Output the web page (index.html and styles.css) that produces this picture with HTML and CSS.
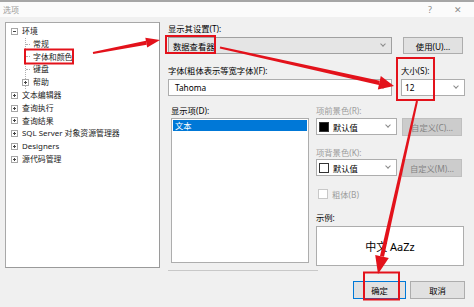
FILE: index.html
```html
<!DOCTYPE html>
<html lang="zh-CN">

<head>
    <meta charset="UTF-8">
    <title>选项</title>
    <link rel="stylesheet" href="styles.css">
</head>

<body>
    <div class="screen">
        <div class="window">
            <!-- Заголовок окна -->
            <div class="titlebar">
                <span class="title">选项</span>
                <span class="tb-btn help">?</span>
                <span class="tb-btn close">✕</span>
            </div>

            <div class="content">
                <!-- Дерево разделов -->
                <div class="tree">
                    <div class="node">
                        <svg class="exp" viewBox="0 0 7 7"><rect x=".5" y=".5" width="6" height="6" fill="#fff" stroke="#a6a6a6"/><path d="M2 3.5h3" stroke="#444"/></svg>
                        <span>环境</span>
                    </div>
                    <div class="children">
                        <div class="leaf">常规</div>
                        <div class="leaf">字体和颜色</div>
                        <div class="leaf">键盘</div>
                        <div class="node sub">
                            <svg class="exp" viewBox="0 0 7 7"><rect x=".5" y=".5" width="6" height="6" fill="#fff" stroke="#a6a6a6"/><path d="M2 3.5h3M3.5 2v3" stroke="#444"/></svg>
                            <span>帮助</span>
                        </div>
                    </div>
                    <div class="node">
                        <svg class="exp" viewBox="0 0 7 7"><rect x=".5" y=".5" width="6" height="6" fill="#fff" stroke="#a6a6a6"/><path d="M2 3.5h3M3.5 2v3" stroke="#444"/></svg>
                        <span>文本编辑器</span>
                    </div>
                    <div class="node">
                        <svg class="exp" viewBox="0 0 7 7"><rect x=".5" y=".5" width="6" height="6" fill="#fff" stroke="#a6a6a6"/><path d="M2 3.5h3M3.5 2v3" stroke="#444"/></svg>
                        <span>查询执行</span>
                    </div>
                    <div class="node">
                        <svg class="exp" viewBox="0 0 7 7"><rect x=".5" y=".5" width="6" height="6" fill="#fff" stroke="#a6a6a6"/><path d="M2 3.5h3M3.5 2v3" stroke="#444"/></svg>
                        <span>查询结果</span>
                    </div>
                    <div class="node">
                        <svg class="exp" viewBox="0 0 7 7"><rect x=".5" y=".5" width="6" height="6" fill="#fff" stroke="#a6a6a6"/><path d="M2 3.5h3M3.5 2v3" stroke="#444"/></svg>
                        <span>SQL Server 对象资源管理器</span>
                    </div>
                    <div class="node">
                        <svg class="exp" viewBox="0 0 7 7"><rect x=".5" y=".5" width="6" height="6" fill="#fff" stroke="#a6a6a6"/><path d="M2 3.5h3M3.5 2v3" stroke="#444"/></svg>
                        <span>Designers</span>
                    </div>
                    <div class="node">
                        <svg class="exp" viewBox="0 0 7 7"><rect x=".5" y=".5" width="6" height="6" fill="#fff" stroke="#a6a6a6"/><path d="M2 3.5h3M3.5 2v3" stroke="#444"/></svg>
                        <span>源代码管理</span>
                    </div>
                </div>

                <!-- Настройки шрифта -->
                <div class="main">
                    <div class="label">显示其设置(T):</div>
                    <div class="row r1">
                        <div class="combo show"><span class="combo-text">数据查看器</span><i class="arrow"></i></div>
                        <button class="btn use">使用(U)...</button>
                    </div>

                    <div class="row r2">
                        <div class="font-field">
                            <div class="label">字体(粗体表示等宽字体)(F):</div>
                            <div class="combo font"><span class="combo-text">Tahoma</span><i class="arrow"></i></div>
                        </div>
                        <div class="size-field">
                            <div class="label">大小(S):</div>
                            <div class="combo size"><span class="combo-text">12</span><i class="arrow"></i></div>
                        </div>
                    </div>

                    <div class="row r3">
                        <div class="items">
                            <div class="label">显示项(D):</div>
                            <div class="list">
                                <div class="list-item selected">文本</div>
                            </div>
                        </div>
                        <div class="props">
                            <div class="label disabled">项前景色(R):</div>
                            <div class="prop-row first">
                                <div class="combo color"><span class="swatch black"></span><span class="combo-text">默认值</span><i class="arrow"></i></div>
                                <button class="btn custom" disabled>自定义(C)...</button>
                            </div>
                            <div class="label disabled second">项背景色(K):</div>
                            <div class="prop-row">
                                <div class="combo color"><span class="swatch white"></span><span class="combo-text">默认值</span><i class="arrow"></i></div>
                                <button class="btn custom" disabled>自定义(M)...</button>
                            </div>
                            <div class="check"><span class="box"></span>粗体(B)</div>
                            <div class="label sample-label">示例:</div>
                            <div class="sample">中文 AaZz</div>
                        </div>
                    </div>

                    <div class="sep"></div>

                    <div class="footer">
                        <button class="btn ok">确定</button>
                        <button class="btn cancel">取消</button>
                    </div>
                </div>
            </div>
        </div>

        <!-- Красные пометки поверх окна -->
        <svg class="marks" width="474" height="307" viewBox="0 0 474 307">
            <g fill="none" stroke="#e3121b" stroke-width="2">
                <rect x="25" y="49.5" width="48" height="14"/>
                <rect x="166" y="36" width="49" height="17"/>
                <rect x="397" y="58" width="37" height="42"/>
                <rect x="364" y="272.5" width="35" height="27"/>
            </g>
            <g fill="#e3121b">
                <polygon points="92.8,52 145.9,40.7 146.7,44.7 93.2,54"/>
                <polygon points="160,40 147.2,47.6 145.3,37.8"/>
                <polygon points="220.2,46.5 379.8,80.7 378.8,84.9 219.8,48.5"/>
                <polygon points="394,86 377.8,89.6 380.8,76"/>
                <polygon points="416,100.8 418,101.2 384,256.8 380,256"/>
                <polygon points="378,274 388.8,257.9 375.2,254.9"/>
            </g>
        </svg>
    </div>
</body>

</html>
```

FILE: styles.css
```css
* {
    box-sizing: border-box;
}

html,
body {
    height: 100%;
    margin: 0;
}

body {
    background: #f0f0f0;
    font-family: "Noto Sans", "Noto Sans CJK SC", sans-serif;
    font-size: 8.3px;
    color: #000;
}

.screen {
    position: relative;
    width: 474px;
    height: 307px;
    overflow: hidden;
}

.window {
    width: 474px;
    height: 307px;
    display: flex;
    flex-direction: column;
}

.titlebar {
    height: 17px;
    border-top: 2px solid #a6a6a6;
    background: #fbfbfb;
    display: flex;
    align-items: center;
    padding-left: 3px;
    color: #9a9a9a;
    font-size: 8px;
}

.title {
    flex: 1;
}

.tb-btn {
    text-align: center;
    color: #8a8a8a;
    font-size: 9px;
}

.help {
    width: 32px;
}

.close {
    width: 24px;
    margin-right: 4px;
}

.content {
    flex: 1;
    display: flex;
    gap: 8px;
    padding: 5px 0 0 5px;
}

/* Дерево */
.tree {
    width: 155px;
    height: 246px;
    background: #fff;
    border: 1px solid #a8a8a8;
    border-right-color: #9a9a9a;
    border-bottom-color: #9a9a9a;
    padding-top: 2px;
    line-height: 12.8px;
    white-space: nowrap;
    color: #1a1a1a;
    font-size: 7.9px;
}

.node {
    display: flex;
    align-items: center;
    height: 12.8px;
    padding-left: 5px;
}

.exp {
    width: 7px;
    height: 7px;
    flex: none;
    margin-right: 4px;
}

.children {
    margin-left: 19px;
    border-left: 1px dotted #b0b0b0;
}

.leaf {
    display: flex;
    align-items: center;
    height: 12.8px;
}

.leaf::before {
    content: "";
    width: 4px;
    border-top: 1px dotted #b0b0b0;
    margin-right: 3px;
}

.node.sub {
    padding-left: 0;
    margin-left: -4px;
}

/* Правая часть */
.main {
    width: 297px;
    display: flex;
    flex-direction: column;
}

.label {
    height: 13px;
    line-height: 13px;
    white-space: nowrap;
}

.label.disabled {
    color: #9c9c9c;
}

.row {
    display: flex;
}

.r1 {
    margin-top: 2px;
    gap: 11px;
}

.r2 {
    margin-top: 10px;
    gap: 9px;
}

.r3 {
    margin-top: 8px;
    gap: 7px;
}

.combo {
    height: 17px;
    border: 1px solid #adadad;
    background: #fff;
    display: flex;
    align-items: center;
    padding-left: 4px;
    white-space: nowrap;
}

.combo-text {
    flex: 1;
}

.arrow {
    width: 4px;
    height: 4px;
    border-right: 1px solid #8a8a8a;
    border-bottom: 1px solid #8a8a8a;
    transform: rotate(45deg);
    margin: -3px 6px 0 0;
}

.combo.show {
    width: 224px;
    background: #e5e5e5;
    border-color: #a0a0a0;
}

.font-field {
    width: 224px;
}

.size-field {
    width: 64px;
}

.combo.font {
    margin-top: 2px;
    padding-left: 6px;
}

.combo.size {
    margin-top: 2px;
    padding-left: 3px;
}

.btn {
    height: 17px;
    border: 1px solid #adadad;
    background: #e1e1e1;
    font: inherit;
    color: #000;
    padding: 0;
}

.use {
    width: 60px;
}

/* Список элементов */
.items {
    margin-left: 3px;
    width: 138px;
}

.list {
    margin-top: 1px;
    height: 145px;
    border: 1px solid #adadad;
    background: #fff;
    padding: 1px;
}

.list-item {
    height: 11px;
    line-height: 11px;
    padding-left: 2px;
}

.list-item.selected {
    background: #0078d7;
    color: #fff;
}

.props {
    width: 149px;
}

.prop-row {
    display: flex;
    gap: 5px;
}

.prop-row.first {
    margin-top: 1px;
}

.label.second {
    margin-top: 10px;
}

.combo.color {
    width: 81px;
    padding-left: 2px;
}

.swatch {
    width: 10px;
    height: 10px;
    border: 1px solid #333;
    margin-right: 4px;
}

.swatch.black {
    background: #000;
}

.swatch.white {
    background: #fff;
}

.btn.custom {
    width: 60px;
    height: 18px;
    background: #cccccc;
    border-color: #bfbfbf;
    color: #838383;
}

.check {
    margin-top: 11px;
    height: 12px;
    display: flex;
    align-items: center;
    color: #9c9c9c;
}

.box {
    width: 10px;
    height: 10px;
    border: 1px solid #c8c8c8;
    background: #fff;
    margin: 0 4px 0 2px;
}

.sample-label {
    margin-top: 11px;
}

.sample {
    margin-top: 2px;
    width: 148px;
    height: 40px;
    border: 1px solid #adadad;
    background: #fff;
    display: flex;
    align-items: center;
    justify-content: center;
    font-size: 11px;
}

.sep {
    margin-top: 4px;
    width: 150px;
    height: 1px;
    background: #c8c8c8;
}

.footer {
    margin-top: 10px;
    display: flex;
    justify-content: flex-end;
    gap: 4px;
}

.btn.ok {
    width: 53px;
    height: 18px;
    border-color: #0078d7;
}

.btn.cancel {
    width: 55px;
    height: 18px;
}

.marks {
    position: absolute;
    top: 0;
    left: 0;
    pointer-events: none;
}
```
